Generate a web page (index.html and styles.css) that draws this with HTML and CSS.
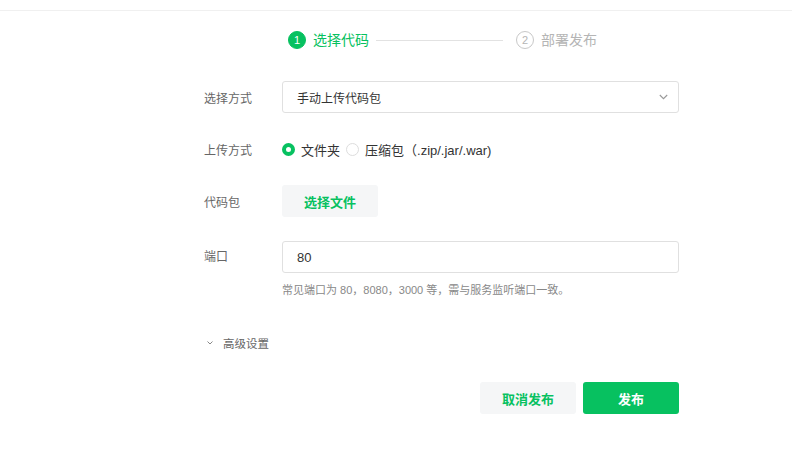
FILE: index.html
```html
<!DOCTYPE html>
<html lang="zh-CN">
<head>
    <meta charset="UTF-8">
    <title>部署</title>
    <link rel="stylesheet" href="styles.css">
</head>
<body>
    <div class="topbar"></div>
    <div class="wrap">
        <div class="steps">
            <div class="step active"><span class="num">1</span><span class="step-name">选择代码</span></div>
            <div class="step-line"></div>
            <div class="step"><span class="num">2</span><span class="step-name">部署发布</span></div>
        </div>

        <div class="row row-select">
            <div class="label">选择方式</div>
            <div class="select">
                <span>手动上传代码包</span>
                <svg class="chev" width="9" height="6" viewBox="0 0 9 6"><path d="M0.8 1l3.7 3.7 3.7-3.7" fill="none" stroke="#999" stroke-width="1.1"/></svg>
            </div>
        </div>

        <div class="row row-radio">
            <div class="label">上传方式</div>
            <div class="radios">
                <span class="radio checked"></span><span class="radio-text">文件夹</span>
                <span class="radio"></span><span class="radio-text">压缩包（.zip/.jar/.war)</span>
            </div>
        </div>

        <div class="row row-file">
            <div class="label">代码包</div>
            <button class="btn btn-light">选择文件</button>
        </div>

        <div class="row row-port">
            <div class="label">端口</div>
            <div class="field">
                <div class="input">80</div>
                <div class="help">常见端口为 80，8080，3000 等，需与服务监听端口一致。</div>
            </div>
        </div>

        <div class="advanced">
            <svg width="6" height="4" viewBox="0 0 6 4"><path d="M0.5 0.5l2.5 2.5 2.5-2.5" fill="none" stroke="#888" stroke-width="1"/></svg>
            <span>高级设置</span>
        </div>

        <div class="actions">
            <button class="btn btn-light">取消发布</button>
            <button class="btn btn-primary">发布</button>
        </div>
    </div>
</body>
</html>
```

FILE: styles.css
```css
body {
    margin: 0;
    font-family: "Liberation Sans", "Noto Sans CJK SC", sans-serif;
    background: #fff;
    color: #333;
}
.topbar {
    height: 10px;
    border-bottom: 1px solid #f0f0f0;
}
.wrap {
    width: 475px;
    margin-left: 204px;
}
.steps {
    display: flex;
    justify-content: center;
    align-items: center;
    margin-top: 20px;
    padding-left: 2px;
    height: 18px;
}
.step {
    display: flex;
    align-items: center;
    color: #b5b5b5;
    font-size: 14px;
    line-height: 18px;
}
.num {
    width: 16px;
    height: 16px;
    border: 1px solid #c8c8c8;
    border-radius: 50%;
    display: flex;
    align-items: center;
    justify-content: center;
    font-size: 11px;
    color: #b5b5b5;
    margin-right: 7px;
}
.step.active {
    color: #07c160;
}
.step.active .num {
    background: #07c160;
    border-color: #07c160;
    color: #fff;
}
.step-line {
    width: 127px;
    height: 1px;
    background: #e2e2e2;
    margin: 0 13px 0 7px;
}
.row {
    display: flex;
    align-items: center;
    margin-bottom: 24px;
}
.row-select {
    margin-top: 32px;
}
.row-port {
    align-items: flex-start;
}
.row-port .label {
    line-height: 32px;
}
.label {
    width: 78px;
    font-size: 12px;
    color: #666;
    flex-shrink: 0;
}
.select, .input {
    width: 397px;
    height: 32px;
    box-sizing: border-box;
    border: 1px solid #e0e0e0;
    border-radius: 3px;
    display: flex;
    align-items: center;
    padding: 0 14px;
    font-size: 12px;
    color: #333;
}
.select {
    justify-content: space-between;
    padding-right: 10px;
}
.input {
    font-size: 13px;
}
.radios {
    display: flex;
    align-items: center;
    height: 24px;
    font-size: 13px;
}
.radio {
    width: 13px;
    height: 13px;
    box-sizing: border-box;
    border: 1px solid #ddd;
    border-radius: 50%;
    margin-right: 6px;
}
.radio.checked {
    border: 4px solid #07c160;
}
.radio-text {
    margin-right: 6px;
}
.btn {
    width: 96px;
    height: 32px;
    border: none;
    border-radius: 3px;
    font-family: inherit;
    font-size: 13px;
    font-weight: bold;
    cursor: pointer;
}
.btn-light {
    background: #f5f6f7;
    color: #07c160;
}
.btn-primary {
    background: #07c160;
    color: #fff;
}
.help {
    margin-top: 8px;
    font-size: 11px;
    line-height: 18px;
    color: #888;
}
.advanced {
    display: flex;
    align-items: center;
    margin-top: 34px;
    height: 20px;
    font-size: 11.5px;
    color: #666;
}
.advanced svg {
    margin: 0 10px 0 3px;
}
.actions {
    display: flex;
    justify-content: flex-end;
    gap: 7px;
    margin-top: 29px;
}
```
